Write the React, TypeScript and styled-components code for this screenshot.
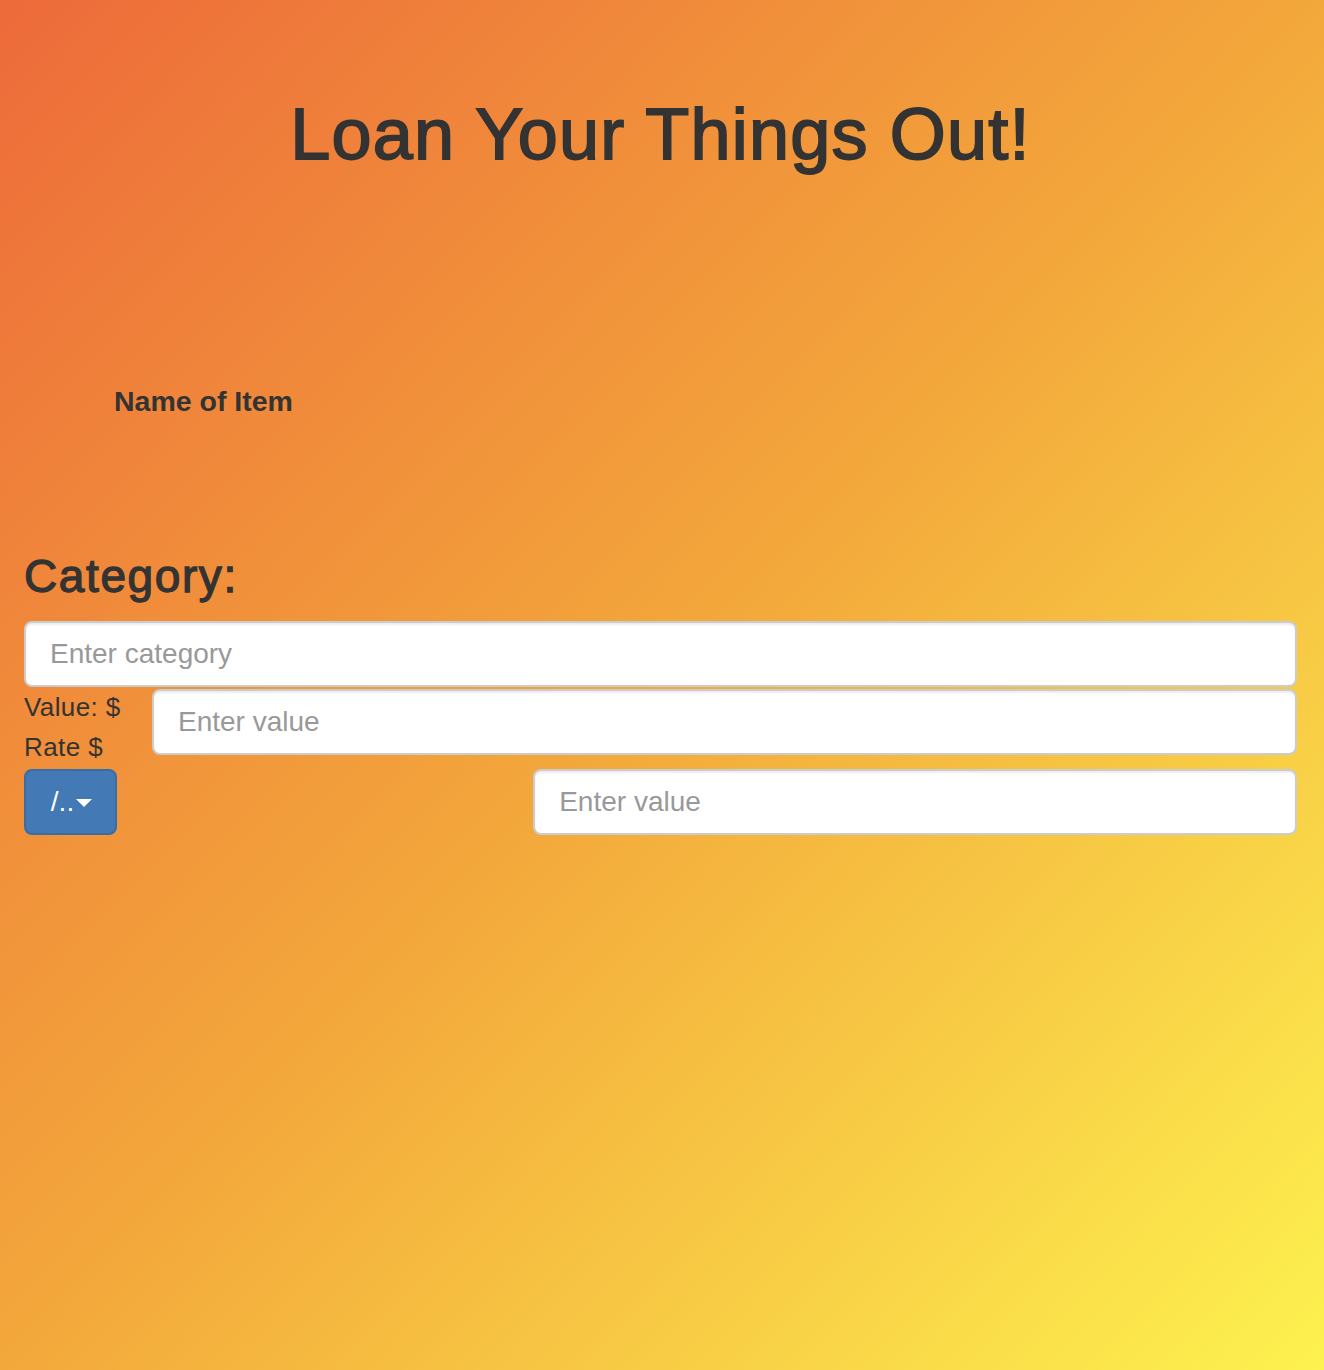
import React from 'react';
import styled, { createGlobalStyle } from 'styled-components';

const GlobalStyle = createGlobalStyle`
  html, body {
    margin: 0;
    padding: 0;
  }
  body {
    font-family: "Liberation Sans", Arial, sans-serif;
    color: #333;
  }
  * {
    box-sizing: border-box;
  }
`;

const Page = styled.main`
  min-height: 100vh;
  padding: 95px 27px 0 24px;
  background: linear-gradient(to bottom right, #ed6a3a 0%, #f3a83b 50%, #fdf24f 100%);
`;

const Title = styled.h1`
  margin: 0;
  font-size: 72px;
  line-height: 1.1;
  font-weight: 500;
  text-align: center;
  -webkit-text-stroke: 1.8px #333;
  letter-spacing: 1.2px;
`;

const ItemLabel = styled.label`
  display: block;
  margin: 207px 0 0 90px;
  font-size: 28.5px;
  line-height: 40px;
  font-weight: 700;
`;

const SectionTitle = styled.h2`
  margin: 130px 0 19px;
  font-size: 46px;
  line-height: 1.1;
  font-weight: 500;
  -webkit-text-stroke: 1.3px #333;
  letter-spacing: 1.6px;
`;

const Input = styled.input`
  display: block;
  width: 100%;
  height: 66px;
  padding: 0 24px;
  font-family: "Liberation Sans", Arial, sans-serif;
  font-size: 28px;
  color: #555;
  background: #fff;
  border: 2px solid #ccc;
  border-radius: 8px;
  box-shadow: inset 0 2px 2px rgba(0, 0, 0, 0.075);
  outline: none;

  &::placeholder {
    color: #999;
  }
`;

const ValueRow = styled.div`
  display: flex;
  align-items: flex-start;
`;

const LabelStack = styled.div`
  width: 128px;
  flex: none;
  display: flex;
  flex-direction: column;
`;

const FieldLabel = styled.span`
  font-size: 26px;
  line-height: 40px;
  letter-spacing: 0.4px;
  white-space: nowrap;
`;

const ValueInput = styled(Input)`
  margin-top: 2px;
`;

const RateRow = styled.div`
  display: grid;
  grid-template-columns: 40% 60%;
  margin-top: 2px;
`;

const DropButton = styled.button`
  width: 93px;
  height: 66px;
  display: flex;
  align-items: center;
  justify-content: center;
  gap: 2px;
  padding: 0 0 0 2px;
  font-family: "Liberation Sans", Arial, sans-serif;
  font-size: 28px;
  color: #fff;
  background: #4379b4;
  border: 2px solid #3a6da6;
  border-radius: 8px;
  cursor: pointer;
`;

const Caret = styled.span`
  width: 0;
  height: 0;
  margin-top: 2px;
  border-left: 8px solid transparent;
  border-right: 8px solid transparent;
  border-top: 8px solid #fff;
`;

const App = () => {
  return (
    <>
      <GlobalStyle />
      <Page>
        <Title>Loan Your Things Out!</Title>
        <ItemLabel>Name of Item</ItemLabel>
        <SectionTitle>Category:</SectionTitle>
        <Input placeholder="Enter category" />
        <ValueRow>
          <LabelStack>
            <FieldLabel>Value: $</FieldLabel>
            <FieldLabel>Rate $</FieldLabel>
          </LabelStack>
          <ValueInput placeholder="Enter value" />
        </ValueRow>
        <RateRow>
          <div>
            <DropButton type="button">
              /..
              <Caret />
            </DropButton>
          </div>
          <Input placeholder="Enter value" />
        </RateRow>
      </Page>
    </>
  );
};

export default App;
